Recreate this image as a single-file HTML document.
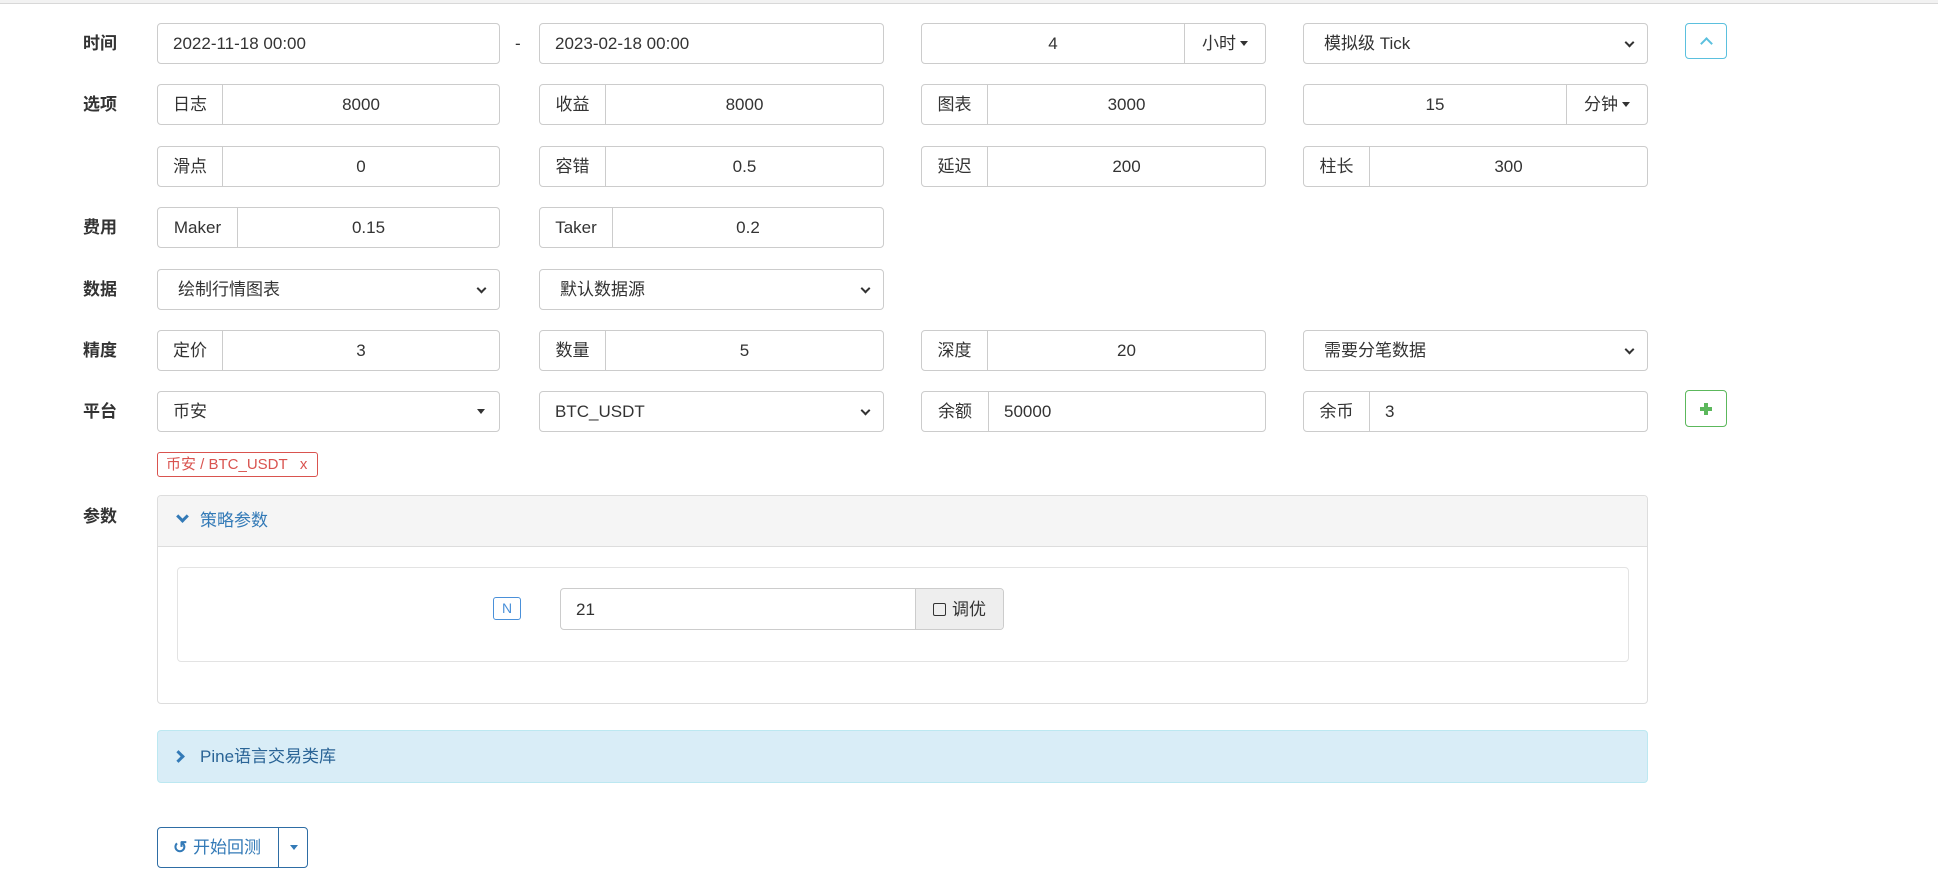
<!DOCTYPE html>
<html><head><meta charset="utf-8"><style>
*{box-sizing:border-box;margin:0;padding:0}
body{width:1938px;height:887px;background:#fff;position:relative;overflow:hidden;font-family:"Liberation Sans","Noto Sans CJK SC",sans-serif;color:#333;font-size:17px}
.top{position:absolute;left:0;top:0;width:1938px;height:4px;background:#f2f2f2;border-bottom:1px solid #d8d8d8}
.lb{position:absolute;left:83px;font-weight:bold;font-size:17px;line-height:41px}
.g{position:absolute;height:41px;border:1px solid #ccc;border-radius:4px;display:flex;align-items:center;background:#fff;overflow:hidden;line-height:1}
.ad{height:100%;display:flex;align-items:center;justify-content:center;border-right:1px solid #ccc;flex:none}
.in{flex:1;text-align:center}
.il{flex:1;padding-left:15px}
.cj{}
.dd{height:100%;border-left:1px solid #ccc;width:81px;display:flex;align-items:center;justify-content:center;flex:none}
.tri{display:inline-block;width:0;height:0;border-left:4px solid transparent;border-right:4px solid transparent;border-top:5px solid #333;margin-left:4px;vertical-align:middle}
.chev{position:absolute;right:14px;top:15px;width:7px;height:7px;border-right:2px solid #333;border-bottom:2px solid #333;transform:rotate(45deg)}
.c1{left:157px;width:343px}.c2{left:539px;width:345px}.c3{left:921px;width:345px}.c4{left:1303px;width:345px}
</style></head><body>
<div class="top"></div>

<div class="lb" style="top:23px">时间</div>
<div class="g c1" style="top:23px"><div class="il">2022-11-18 00:00</div></div>
<div style="position:absolute;left:515px;top:23px;line-height:41px">-</div>
<div class="g c2" style="top:23px"><div class="il">2023-02-18 00:00</div></div>
<div class="g c3" style="top:23px"><div class="in">4</div><div class="dd">小时<span class="tri"></span></div></div>
<div class="g c4" style="top:23px"><div class="il cj" style="padding-left:20px">模拟级 Tick</div><div class="chev"></div></div>
<div style="position:absolute;left:1685px;top:23px;width:42px;height:36px;border:1px solid #5bc0de;border-radius:4px"><div style="position:absolute;left:16px;top:15px;width:9px;height:9px;border-left:2px solid #5bc0de;border-top:2px solid #5bc0de;transform:rotate(45deg)"></div></div>

<div class="lb" style="top:84px">选项</div>
<div class="g c1" style="top:84px"><div class="ad" style="width:65px">日志</div><div class="in">8000</div></div>
<div class="g c2" style="top:84px"><div class="ad" style="width:66px">收益</div><div class="in">8000</div></div>
<div class="g c3" style="top:84px"><div class="ad" style="width:66px">图表</div><div class="in">3000</div></div>
<div class="g c4" style="top:84px"><div class="in">15</div><div class="dd">分钟<span class="tri"></span></div></div>

<div class="g c1" style="top:146px"><div class="ad" style="width:65px">滑点</div><div class="in">0</div></div>
<div class="g c2" style="top:146px"><div class="ad" style="width:66px">容错</div><div class="in">0.5</div></div>
<div class="g c3" style="top:146px"><div class="ad" style="width:66px">延迟</div><div class="in">200</div></div>
<div class="g c4" style="top:146px"><div class="ad" style="width:66px">柱长</div><div class="in">300</div></div>

<div class="lb" style="top:207px">费用</div>
<div class="g c1" style="top:207px"><div class="ad" style="width:80px">Maker</div><div class="in">0.15</div></div>
<div class="g c2" style="top:207px"><div class="ad" style="width:73px">Taker</div><div class="in">0.2</div></div>

<div class="lb" style="top:269px">数据</div>
<div class="g c1" style="top:269px"><div class="il cj" style="padding-left:20px">绘制行情图表</div><div class="chev"></div></div>
<div class="g c2" style="top:269px"><div class="il cj" style="padding-left:20px">默认数据源</div><div class="chev"></div></div>

<div class="lb" style="top:330px">精度</div>
<div class="g c1" style="top:330px"><div class="ad" style="width:65px">定价</div><div class="in">3</div></div>
<div class="g c2" style="top:330px"><div class="ad" style="width:66px">数量</div><div class="in">5</div></div>
<div class="g c3" style="top:330px"><div class="ad" style="width:66px">深度</div><div class="in">20</div></div>
<div class="g c4" style="top:330px"><div class="il cj" style="padding-left:20px">需要分笔数据</div><div class="chev"></div></div>

<div class="lb" style="top:391px">平台</div>
<div class="g c1" style="top:391px"><div class="il cj">币安</div><span class="tri" style="position:absolute;right:14px;top:17px"></span></div>
<div class="g c2" style="top:391px"><div class="il">BTC_USDT</div><div class="chev"></div></div>
<div class="g c3" style="top:391px"><div class="ad" style="width:67px">余额</div><div class="il">50000</div></div>
<div class="g c4" style="top:391px"><div class="ad" style="width:66px">余币</div><div class="il">3</div></div>
<div style="position:absolute;left:1685px;top:390px;width:42px;height:37px;border:1px solid #5cb85c;border-radius:4px">
<div style="position:absolute;left:14px;top:16px;width:12px;height:4px;background:#5cb85c"></div>
<div style="position:absolute;left:18px;top:12px;width:4px;height:12px;background:#5cb85c"></div></div>

<div style="position:absolute;left:157px;top:452px;width:161px;height:25px;border:1px solid #d9534f;border-radius:3px;color:#d9534f;font-size:15px;line-height:23px;padding-left:8px">币安 / BTC_USDT &nbsp; x</div>

<div class="lb" style="top:496px;line-height:41px">参数</div>
<div style="position:absolute;left:157px;top:495px;width:1491px;height:209px;border:1px solid #ddd;border-radius:4px;overflow:hidden">
 <div style="height:51px;background:#f5f5f5;border-bottom:1px solid #ddd;color:#337ab7;font-size:17px;line-height:50px;padding-left:42px;position:relative">
  <div style="position:absolute;left:20px;top:16px;width:9px;height:9px;border-right:3px solid #337ab7;border-bottom:3px solid #337ab7;transform:rotate(45deg)"></div>策略参数</div>
 <div style="position:absolute;left:19px;top:71px;width:1452px;height:95px;border:1px solid #e3e3e3;border-radius:4px"></div>
</div>
<div style="position:absolute;left:493px;top:597px;width:28px;height:23px;border:1px solid #4a90d9;border-radius:3px;color:#4a90d9;font-size:14px;line-height:21px;text-align:center">N</div>
<div class="g" style="left:560px;top:588px;width:444px;height:42px"><div class="il">21</div><div style="width:88px;height:100%;background:#eee;border-left:1px solid #ccc;display:flex;align-items:center;justify-content:center"><span style="display:inline-block;width:13px;height:13px;border:1px solid #333;border-radius:2px;margin-right:6px"></span>调优</div></div>

<div style="position:absolute;left:157px;top:730px;width:1491px;height:53px;background:#d9edf7;border:1px solid #bce8f1;border-radius:4px;color:#31708f;line-height:51px;padding-left:42px;font-size:17px">
 <div style="position:absolute;left:16px;top:21px;width:9px;height:9px;border-right:3px solid #337ab7;border-top:3px solid #337ab7;transform:rotate(45deg)"></div><span style="color:#2a6496">Pine语言交易类库</span></div>

<div style="position:absolute;left:157px;top:827px;width:151px;height:41px;border:1px solid #2e6da4;border-radius:4px;color:#337ab7;font-size:17px;line-height:39px">
 <span style="position:absolute;left:15px;top:0;font-weight:bold">↺</span><span style="position:absolute;left:35px">开始回测</span>
 <div style="position:absolute;left:120px;top:0;width:1px;height:39px;background:#2e6da4"></div>
 <span class="tri" style="position:absolute;left:128px;top:17px;border-top-color:#337ab7"></span></div>
</body></html>
